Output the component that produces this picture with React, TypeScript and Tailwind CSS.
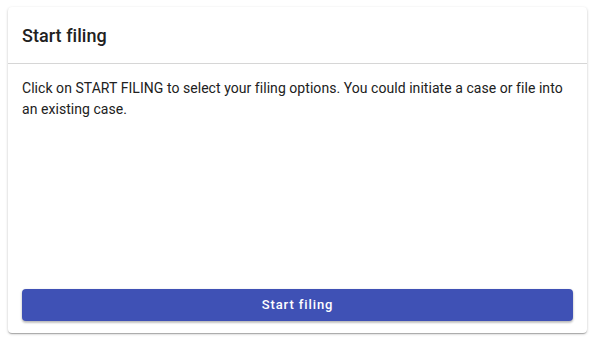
export default function App() {
  return (
    <div className="w-[595px] h-[341px] bg-white pt-[7px] px-2" style={{ fontFamily: 'Roboto, "Liberation Sans", sans-serif' }}>
      <div className="h-[326px] flex flex-col rounded bg-white shadow-[0_1px_3px_rgba(0,0,0,0.2),0_1px_1px_rgba(0,0,0,0.14),0_2px_1px_-1px_rgba(0,0,0,0.12)]">
        <div className="h-[57px] flex items-center px-[14px] pt-[1px] border-b border-[#d6d6d6]">
          <h2 className="text-[18px] font-medium text-[#212121] leading-none tracking-[0.05px]">Start filing</h2>
        </div>
        <div className="flex-1 flex flex-col px-[14px] pt-[14px] pb-[12px]">
          <p className="text-[14px] leading-[21px] text-[#212121] tracking-[0.05px]">
            Click on START FILING to select your filing options. You could initiate a case or file into an existing case.
          </p>
          <div className="flex-1" />
          <button className="h-[32px] w-full rounded bg-[#3f51b5] text-white text-[13px] font-medium tracking-[0.07em] shadow-[0_1px_3px_rgba(0,0,0,0.2),0_2px_2px_rgba(0,0,0,0.14)]">
            Start filing
          </button>
        </div>
      </div>
    </div>
  );
}
